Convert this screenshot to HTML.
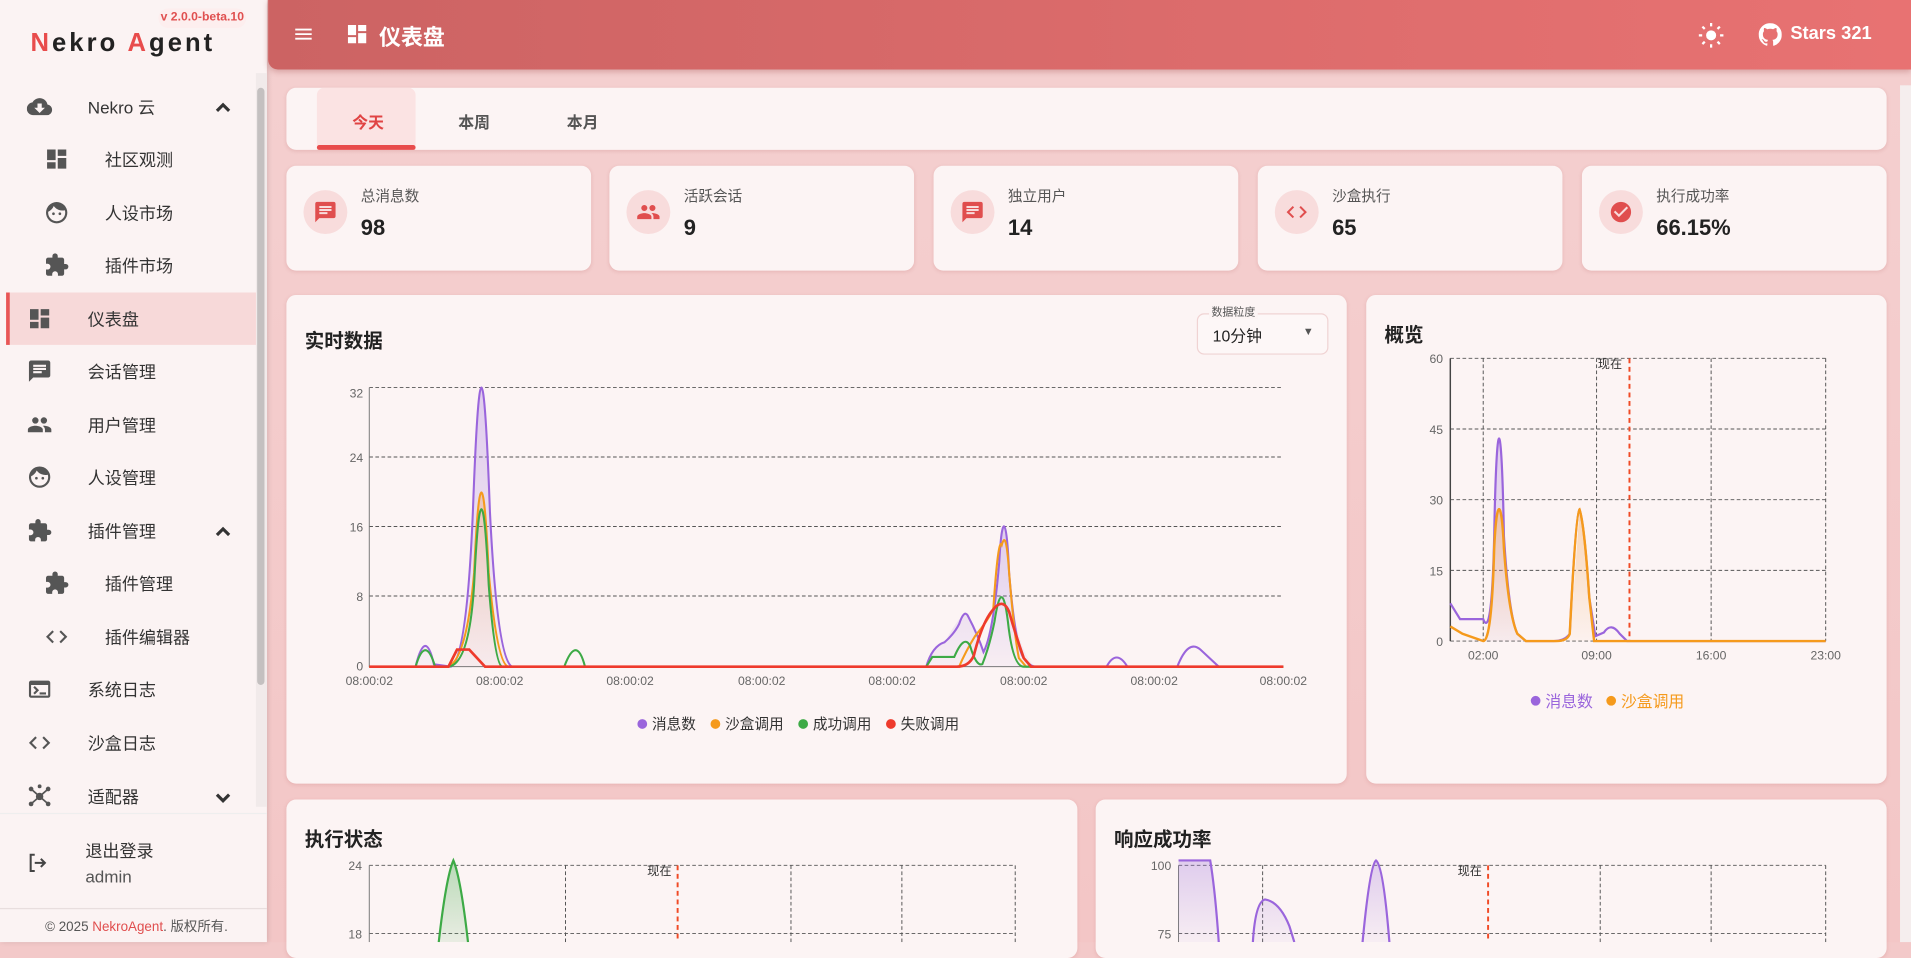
<!DOCTYPE html>
<html><head><meta charset="utf-8"><style>
*{box-sizing:border-box;margin:0;padding:0}
html,body{width:1911px;height:942px;overflow:hidden;background:#f3c9c9}
#w{position:absolute;left:0;top:0;width:1568px;height:773px;transform:scale(1.21875);transform-origin:0 0;font-family:"Liberation Sans","Noto Sans CJK SC",sans-serif;color:#333;background:linear-gradient(180deg,#f4d0d0,#f3c6c6)}
.a{position:absolute}
.card{position:absolute;background:#fcf4f4;border-radius:8px;box-shadow:0 1px 3px rgba(180,90,90,.18)}
#sb{left:0;top:0;width:219px;height:773px;background:#fbf3f3;box-shadow:1px 0 4px rgba(0,0,0,.12)}
.mi{position:absolute;left:0;width:210px;height:43px;font-size:14px;color:#333;display:flex;align-items:center}
.mi svg{position:absolute;width:21px;height:21px;fill:#555}
.mi span{position:absolute}
.mi .ch{left:176px;width:14px;height:14px;fill:none;stroke:#333;stroke-width:2.6}
.st .ic{position:absolute;left:14px;top:20px;width:36px;height:36px;border-radius:50%;background:#f8dcdc}
.st .ic svg{position:absolute;left:8px;top:8px;width:20px;height:20px;fill:#e04e4e}
.st .l{position:absolute;left:61px;top:16px;font-size:12px;color:#555}
.st .v{position:absolute;left:61px;top:41px;font-size:18px;font-weight:bold;color:#222}
.t{font-size:16px;font-weight:bold;color:#222}
</style></head><body><div id="w">
<div class="a" id="sb">
 <div class="a" style="left:130px;top:7px;width:72px;height:16px;border-radius:8px;background:#fdeeee;font-size:10px;color:#e05050;text-align:center;line-height:16px;font-weight:bold">v 2.0.0-beta.10</div>
 <div class="a" style="left:25px;top:24px;font-size:21px;font-weight:bold;letter-spacing:2.5px;color:#222"><span style="color:#e84c4c">N</span>ekro <span style="color:#e84c4c">A</span>gent</div>
 <div class="a" style="left:210px;top:60px;width:9px;height:602px;background:#f1eaea"></div>
 <div class="a" style="left:211px;top:72px;width:6px;height:490px;background:#c4c0c0;border-radius:3px"></div>
 <div class="mi" style="top:66px"><svg style="left:22px" viewBox="0 0 24 24"><path d="M19.35 10.04A7.49 7.49 0 0 0 12 4C9.11 4 6.6 5.640 5.35 8.04A6 6 0 0 0 0 14a6 6 0 0 0 6 6h13a5 5 0 0 0 .35-9.96zM17 13l-5 5-5-5h3V9h4v4h3z"/></svg><span style="left:72px">Nekro 云</span><svg class="ch" viewBox="0 0 14 14"><path d="M2 10l5-5 5 5"/></svg></div>
 <div class="mi" style="top:109px"><svg style="left:36px" viewBox="0 0 24 24"><path d="M3 13h8V3H3v10zm0 8h8v-6H3v6zm10 0h8V11h-8v10zm0-18v6h8V3h-8z"/></svg><span style="left:86px">社区观测</span></div>
 <div class="mi" style="top:153px"><svg style="left:36px" viewBox="0 0 24 24"><path d="M9 11.75a1.25 1.25 0 1 0 0 2.5 1.25 1.25 0 0 0 0-2.5zm6 0a1.25 1.25 0 1 0 0 2.5 1.25 1.25 0 0 0 0-2.5zM12 2a10 10 0 1 0 0 20 10 10 0 0 0 0-20zm0 18c-4.41 0-8-3.59-8-8 0-.29.02-.58.05-.86 2.360-1.05 4.230-2.98 5.210-5.37a9.970 9.970 0 0 0 10.410 3.970c.21.71.33 1.47.33 2.26 0 4.41-3.59 8-8 8z"/></svg><span style="left:86px">人设市场</span></div>
 <div class="mi" style="top:196px"><svg style="left:36px" viewBox="0 0 24 24"><path d="M20.5 11H19V7a2 2 0 0 0-2-2h-4V3.5a2.5 2.5 0 0 0-5 0V5H4a2 2 0 0 0-2 2v3.8h1.5a2.7 2.7 0 0 1 0 5.4H2V20a2 2 0 0 0 2 2h3.8v-1.5a2.7 2.7 0 0 1 5.4 0V22H17a2 2 0 0 0 2-2v-4h1.5a2.5 2.5 0 0 0 0-5z"/></svg><span style="left:86px">插件市场</span></div>
 <div class="a" style="left:5px;top:240px;width:205px;height:43px;background:#f7d9d9;border-left:3px solid #e85555"></div>
 <div class="mi" style="top:240px"><svg style="left:22px" viewBox="0 0 24 24"><path d="M3 13h8V3H3v10zm0 8h8v-6H3v6zm10 0h8V11h-8v10zm0-18v6h8V3h-8z"/></svg><span style="left:72px">仪表盘</span></div>
 <div class="mi" style="top:283px"><svg style="left:22px" viewBox="0 0 24 24"><path d="M20 2H4a2 2 0 0 0-2 2v18l4-4h14a2 2 0 0 0 2-2V4a2 2 0 0 0-2-2zM6 9h12v2H6V9zm8 5H6v-2h8v2zm4-6H6V6h12v2z"/></svg><span style="left:72px">会话管理</span></div>
 <div class="mi" style="top:327px"><svg style="left:22px" viewBox="0 0 24 24"><path d="M16 11a3 3 0 1 0 0-6 3 3 0 0 0 0 6zm-8 0a3 3 0 1 0 0-6 3 3 0 0 0 0 6zm0 2c-2.33 0-7 1.17-7 3.5V19h14v-2.5C15 14.17 10.33 13 8 13zm8 0c-.29 0-.62.02-.97.05 1.16.84 1.97 1.97 1.97 3.45V19h6v-2.5c0-2.33-4.67-3.5-7-3.5z"/></svg><span style="left:72px">用户管理</span></div>
 <div class="mi" style="top:370px"><svg style="left:22px" viewBox="0 0 24 24"><path d="M9 11.75a1.25 1.25 0 1 0 0 2.5 1.25 1.25 0 0 0 0-2.5zm6 0a1.25 1.25 0 1 0 0 2.5 1.25 1.25 0 0 0 0-2.5zM12 2a10 10 0 1 0 0 20 10 10 0 0 0 0-20zm0 18c-4.41 0-8-3.59-8-8 0-.29.02-.58.05-.86 2.360-1.05 4.230-2.98 5.210-5.37a9.970 9.970 0 0 0 10.410 3.970c.21.71.33 1.47.33 2.26 0 4.41-3.59 8-8 8z"/></svg><span style="left:72px">人设管理</span></div>
 <div class="mi" style="top:414px"><svg style="left:22px" viewBox="0 0 24 24"><path d="M20.5 11H19V7a2 2 0 0 0-2-2h-4V3.5a2.5 2.5 0 0 0-5 0V5H4a2 2 0 0 0-2 2v3.8h1.5a2.7 2.7 0 0 1 0 5.4H2V20a2 2 0 0 0 2 2h3.8v-1.5a2.7 2.7 0 0 1 5.4 0V22H17a2 2 0 0 0 2-2v-4h1.5a2.5 2.5 0 0 0 0-5z"/></svg><span style="left:72px">插件管理</span><svg class="ch" viewBox="0 0 14 14"><path d="M2 10l5-5 5 5"/></svg></div>
 <div class="mi" style="top:457px"><svg style="left:36px" viewBox="0 0 24 24"><path d="M20.5 11H19V7a2 2 0 0 0-2-2h-4V3.5a2.5 2.5 0 0 0-5 0V5H4a2 2 0 0 0-2 2v3.8h1.5a2.7 2.7 0 0 1 0 5.4H2V20a2 2 0 0 0 2 2h3.8v-1.5a2.7 2.7 0 0 1 5.4 0V22H17a2 2 0 0 0 2-2v-4h1.5a2.5 2.5 0 0 0 0-5z"/></svg><span style="left:86px">插件管理</span></div>
 <div class="mi" style="top:501px"><svg style="left:36px" viewBox="0 0 24 24"><path d="M9.4 16.6 4.8 12l4.6-4.6L8 6l-6 6 6 6 1.4-1.4zm5.2 0 4.6-4.6-4.6-4.6L16 6l6 6-6 6-1.4-1.4z"/></svg><span style="left:86px">插件编辑器</span></div>
 <div class="mi" style="top:544px"><svg style="left:22px" viewBox="0 0 24 24"><path d="M20 4H4a2 2 0 0 0-2 2v12a2 2 0 0 0 2 2h16a2 2 0 0 0 2-2V6a2 2 0 0 0-2-2zm0 14H4V8h16v10zm-2-1h-6v-2h6v2zM7.5 17l-1.41-1.41L8.67 13l-2.59-2.59L7.5 9l4 4-4 4z"/></svg><span style="left:72px">系统日志</span></div>
 <div class="mi" style="top:588px"><svg style="left:22px" viewBox="0 0 24 24"><path d="M9.4 16.6 4.8 12l4.6-4.6L8 6l-6 6 6 6 1.4-1.4zm5.2 0 4.6-4.6-4.6-4.6L16 6l6 6-6 6-1.4-1.4z"/></svg><span style="left:72px">沙盒日志</span></div>
 <div class="mi" style="top:632px"><svg style="left:22px" viewBox="0 0 24 24"><circle cx="12" cy="12" r="3.5"/><circle cx="4" cy="5" r="2.2"/><circle cx="20" cy="5" r="2.2"/><circle cx="4" cy="19" r="2.2"/><circle cx="20" cy="19" r="2.2"/><circle cx="12" cy="2.5" r="1.8"/><path d="M4 5l8 7 8-7M4 19l8-7 8 7" stroke="#555" stroke-width="1.6" fill="none"/></svg><span style="left:72px">适配器</span><svg class="ch" viewBox="0 0 14 14"><path d="M2 5l5 5 5-5"/></svg></div>
 <div class="a" style="left:0;top:667px;width:219px;height:1px;background:#eee"></div>
 <svg class="a" style="left:21px;top:698px;width:20px;height:20px" viewBox="0 0 24 24" fill="none" stroke="#444" stroke-width="2"><path d="M9 4H5v16h4M15 8l4 4-4 4M19 12H9"/></svg>
 <div class="a" style="left:70px;top:688px;font-size:14px;color:#333">退出登录</div>
 <div class="a" style="left:70px;top:711px;font-size:14px;color:#555">admin</div>
 <div class="a" style="left:0;top:745px;width:219px;height:1px;background:#e8dede"></div>
 <div class="a" style="left:37px;top:752px;font-size:11px;color:#555">© 2025 <span style="color:#e04e4e">NekroAgent</span>. 版权所有.</div>
</div>
<div class="a" style="left:220px;top:0;width:1348px;height:57px;border-radius:0 0 0 8px;background:linear-gradient(90deg,#cc6363,#e87272);box-shadow:0 2px 5px rgba(150,60,60,.3)">
 <svg class="a" style="left:20px;top:19px;width:18px;height:18px" viewBox="0 0 24 24" fill="#fff"><path d="M3 18h18v-2H3v2zm0-5h18v-2H3v2zm0-7v2h18V6H3z"/></svg>
 <svg class="a" style="left:63px;top:18px;width:20px;height:20px" viewBox="0 0 24 24" fill="#fff"><path d="M3 13h8V3H3v10zm0 8h8v-6H3v6zm10 0h8V11h-8v10zm0-18v6h8V3h-8z"/></svg>
 <div class="a" style="left:91px;top:17px;font-size:18px;font-weight:bold;color:#fff">仪表盘</div>
 <svg class="a" style="left:1173px;top:18px;width:22px;height:22px" viewBox="0 0 24 24" fill="#fff"><circle cx="12" cy="12" r="4.5"/><path d="M12 1v3M12 20v3M1 12h3M20 12h3M4.2 4.2l2.1 2.1M17.7 17.7l2.1 2.1M4.2 19.8l2.1-2.1M17.7 6.3l2.1-2.1" stroke="#fff" stroke-width="2"/></svg>
 <svg class="a" style="left:1223px;top:19px;width:19px;height:19px" viewBox="0 0 16 16" fill="#fff"><path d="M8 0C3.58 0 0 3.58 0 8c0 3.54 2.29 6.53 5.47 7.59.4.07.55-.17.55-.38v-1.33c-2.23.48-2.7-1.07-2.7-1.07-.36-.93-.89-1.17-.89-1.17-.73-.5.05-.49.05-.49.8.06 1.23.83 1.23.83.72 1.22 1.87.87 2.33.66.07-.52.28-.87.51-1.07-1.78-.2-3.64-.89-3.640-3.95 0-.87.31-1.59.82-2.15-.08-.2-.36-1.02.08-2.12 0 0 .67-.21 2.2.82a7.6 7.6 0 0 1 4 0c1.53-1.04 2.2-.82 2.2-.82.44 1.1.16 1.92.08 2.12.51.56.82 1.27.82 2.15 0 3.07-1.87 3.75-3.65 3.95.29.25.54.73.54 1.48v2.2c0 .21.15.46.55.38A8.01 8.01 0 0 0 16 8c0-4.42-3.58-8-8-8z"/></svg>
 <div class="a" style="left:1249px;top:19px;font-size:15px;font-weight:bold;color:#fff">Stars 321</div>
</div>
<div class="a" style="left:1559px;top:70px;width:9px;height:703px;background:#f5eeee"></div>
<div class="card" style="left:235px;top:72px;width:1313px;height:51px">
 <div class="a" style="left:25px;top:0;width:81px;height:51px;background:#fbe3e3;border-radius:6px 6px 0 0"></div>
 <div class="a" style="left:25px;top:47px;width:81px;height:4px;background:#e84c4c;border-radius:2px"></div>
 <div class="a" style="left:54px;top:18px;font-size:13px;font-weight:bold;color:#e04444">今天</div>
 <div class="a" style="left:141px;top:18px;font-size:13px;font-weight:bold;color:#555">本周</div>
 <div class="a" style="left:230px;top:18px;font-size:13px;font-weight:bold;color:#555">本月</div>
</div>
<div class="card st" style="left:235px;top:136px;width:250px;height:86px"><div class="ic"><svg viewBox="0 0 24 24"><path d="M20 2H4a2 2 0 0 0-2 2v18l4-4h14a2 2 0 0 0 2-2V4a2 2 0 0 0-2-2zM6 9h12v2H6V9zm8 5H6v-2h8v2zm4-6H6V6h12v2z"/></svg></div><div class="l">总消息数</div><div class="v">98</div></div>
<div class="card st" style="left:500px;top:136px;width:250px;height:86px"><div class="ic"><svg viewBox="0 0 24 24"><path d="M16 11a3 3 0 1 0 0-6 3 3 0 0 0 0 6zm-8 0a3 3 0 1 0 0-6 3 3 0 0 0 0 6zm0 2c-2.33 0-7 1.17-7 3.5V19h14v-2.5C15 14.17 10.33 13 8 13zm8 0c-.29 0-.62.02-.97.05 1.16.84 1.97 1.970 1.970 3.45V19h6v-2.5c0-2.33-4.67-3.5-7-3.5z"/></svg></div><div class="l">活跃会话</div><div class="v">9</div></div>
<div class="card st" style="left:766px;top:136px;width:250px;height:86px"><div class="ic"><svg viewBox="0 0 24 24"><path d="M20 2H4a2 2 0 0 0-2 2v18l4-4h14a2 2 0 0 0 2-2V4a2 2 0 0 0-2-2zM6 9h12v2H6V9zm8 5H6v-2h8v2zm4-6H6V6h12v2z"/></svg></div><div class="l">独立用户</div><div class="v">14</div></div>
<div class="card st" style="left:1032px;top:136px;width:250px;height:86px"><div class="ic"><svg viewBox="0 0 24 24"><path d="M9.4 16.6 4.8 12l4.6-4.6L8 6l-6 6 6 6 1.4-1.4zm5.2 0 4.6-4.6-4.6-4.6L16 6l6 6-6 6-1.4-1.4z"/></svg></div><div class="l">沙盒执行</div><div class="v">65</div></div>
<div class="card st" style="left:1298px;top:136px;width:250px;height:86px"><div class="ic"><svg viewBox="0 0 24 24"><path d="M12 2a10 10 0 1 0 0 20 10 10 0 0 0 0-20zm-2 15-5-5 1.41-1.41L10 14.17l7.59-7.59L19 8l-9 9z"/></svg></div><div class="l">执行成功率</div><div class="v">66.15%</div></div>

<div class="card" style="left:235px;top:242px;width:870px;height:401px">
 <div class="a t" style="left:15px;top:24px">实时数据</div>
 <div class="a" style="left:747px;top:15px;width:108px;height:34px;border:1px solid #f0d3d3;border-radius:6px;background:#fdf7f7"></div>
 <div class="a" style="left:757px;top:7px;font-size:9px;color:#555;background:#fcf4f4;padding:0 2px">数据粒度</div>
 <div class="a" style="left:760px;top:23px;font-size:13px;color:#222">10分钟</div>
 <div class="a" style="left:834px;top:25px;font-size:9px;color:#555">▼</div>
</div>
<svg class="a" style="left:0;top:0" width="1568" height="773" viewBox="0 0 1568 773" font-family="Liberation Sans" font-size="10" fill="#666">
 <defs>
  <linearGradient id="gp" x1="0" y1="0" x2="0" y2="1"><stop offset="0" stop-color="#9b6fdc" stop-opacity=".3"/><stop offset="1" stop-color="#9b6fdc" stop-opacity=".05"/></linearGradient>
  <linearGradient id="go" x1="0" y1="0" x2="0" y2="1"><stop offset="0" stop-color="#f39a3a" stop-opacity=".3"/><stop offset="1" stop-color="#f39a3a" stop-opacity=".03"/></linearGradient>
 </defs>
 <g stroke="#555" stroke-dasharray="3,2" stroke-width=".8">
  <path d="M303 318H1053M303 375H1053M303 432H1053M303 489H1053"/>
 </g>
 <path d="M303 318V547H1053" stroke="#777" fill="none" stroke-width=".8"/>
 <g font-size="10" text-anchor="end"><text x="298" y="326">32</text><text x="298" y="379">24</text><text x="298" y="436">16</text><text x="298" y="493">8</text><text x="298" y="550">0</text></g>
 <g font-size="10" text-anchor="middle" fill="#666"><text x="303" y="562">08:00:02</text><text x="410" y="562">08:00:02</text><text x="517" y="562">08:00:02</text><text x="625" y="562">08:00:02</text><text x="732" y="562">08:00:02</text><text x="840" y="562">08:00:02</text><text x="947" y="562">08:00:02</text><text x="1053" y="562">08:00:02</text></g>
 <path d="M341 547Q349 514 356 545L370 547Q383 540 388 420C393 284 397 284 402 420Q408 540 420 547Z" fill="url(#gp)"/>
 <path d="M760 547Q765 530 775 527Q790 500 794 505Q802 520 807 535Q815 520 820 460C822 421 826 421 828 470Q833 535 850 547Z" fill="url(#gp)"/>
 <path d="M372 547Q385 540 389 470C393 382 397 382 401 470Q408 545 417 547Z" fill="url(#go)"/>
 <g fill="none" stroke-width="1.7">
  <path d="M303 547H341Q349 514 356 545L370 547Q383 540 388 420C393 284 397 284 402 420Q408 540 420 547H760Q765 530 775 527Q783 520 787 512Q791 500 794 505Q802 520 807 535Q815 520 820 460C822 421 826 421 828 470Q833 530 840 540Q845 547 850 547H908Q916 532 925 547H966Q975 524 985 533L1000 547H1053" stroke="#9a65dc"/>
  <path d="M303 547H368Q383 540 389 470C393 382 397 382 401 470Q408 545 417 547H787Q792 535 800 522Q810 510 815 500Q819 440 822 447C824 440 826 440 828 470Q832 520 836 540L842 547H1053" stroke="#f59a1c"/>
  <path d="M303 547H341Q349 520 357 547H368Q385 545 389 480C393 397 397 397 401 480Q406 545 412 547H463Q473 520 480 547H760L765 539H783Q791 520 796 530Q801 547 806 545Q812 530 816 510Q822 470 827 510Q831 547 840 547H1053" stroke="#3daa46"/>
  <path d="M303 547H368L375 533H385L398 547H785Q795 547 799 538Q806 510 815 500Q823 490 828 502Q833 520 840 540L846 547H1053" stroke="#ee3a2c" stroke-width="2.2"/>
 </g>
 <g font-size="12" fill="#333"><circle cx="527" cy="594" r="4" fill="#9a65dc"/><text x="535" y="598">消息数</text><circle cx="587" cy="594" r="4" fill="#f59a1c"/><text x="595" y="598">沙盒调用</text><circle cx="659" cy="594" r="4" fill="#3daa46"/><text x="667" y="598">成功调用</text><circle cx="731" cy="594" r="4" fill="#ee3a2c"/><text x="739" y="598">失败调用</text></g>
</svg>
<div class="card" style="left:1121px;top:242px;width:427px;height:401px"><div class="a t" style="left:15px;top:19px">概览</div></div>
<div class="card" style="left:235px;top:656px;width:649px;height:130px"><div class="a t" style="left:15px;top:19px">执行状态</div></div>
<div class="card" style="left:899px;top:656px;width:649px;height:130px"><div class="a t" style="left:15px;top:19px">响应成功率</div></div>
<svg class="a" style="left:0;top:0" width="1568" height="773" viewBox="0 0 1568 773" font-family="Liberation Sans" font-size="10" fill="#666">
 <defs>
  <linearGradient id="gp2" x1="0" y1="0" x2="0" y2="1"><stop offset="0" stop-color="#9b6fdc" stop-opacity=".3"/><stop offset="1" stop-color="#9b6fdc" stop-opacity=".05"/></linearGradient>
  <linearGradient id="go2" x1="0" y1="0" x2="0" y2="1"><stop offset="0" stop-color="#f39a3a" stop-opacity=".35"/><stop offset="1" stop-color="#f39a3a" stop-opacity=".03"/></linearGradient>
  <linearGradient id="gg2" x1="0" y1="0" x2="0" y2="1"><stop offset="0" stop-color="#3daa46" stop-opacity=".35"/><stop offset="1" stop-color="#3daa46" stop-opacity=".1"/></linearGradient>
 </defs>
 <g stroke="#555" stroke-dasharray="3,2" stroke-width=".8" fill="none">
  <path d="M1190 294H1498M1190 352H1498M1190 410H1498M1190 468H1498M1190 526H1498M1217 294V526M1310 294V526M1404 294V526M1498 294V526"/>
  <path d="M303 710H833M303 766H833M464 710V773M649 710V773M740 710V773M833 710V773"/>
  <path d="M967 710H1498M967 766H1498M1036 710V773M1313 710V773M1404 710V773M1498 710V773"/>
 </g>
 <path d="M1190 294V526" stroke="#444" stroke-width="1.2"/>
 <path d="M303 710V773M967 710V773" stroke="#777" stroke-width=".8"/>
 <g stroke="#f04a25" stroke-dasharray="4,3" stroke-width="1.6"><path d="M1337 294V526M556 710V773M1221 710V773"/></g>
 <g fill="#333" font-size="10"><text x="1311" y="302">现在</text><text x="531" y="718">现在</text><text x="1196" y="718">现在</text></g>
 <g text-anchor="end"><text x="1184" y="298">60</text><text x="1184" y="356">45</text><text x="1184" y="414">30</text><text x="1184" y="472">15</text><text x="1184" y="530">0</text>
  <text x="297" y="714">24</text><text x="297" y="770">18</text><text x="961" y="714">100</text><text x="961" y="770">75</text></g>
 <g text-anchor="middle"><text x="1217" y="541">02:00</text><text x="1310" y="541">09:00</text><text x="1404" y="541">16:00</text><text x="1498" y="541">23:00</text></g>
 <path d="M1217 526Q1225 526 1226 440C1228 333 1232 333 1234 440Q1238 505 1245 520L1250 526Z" fill="url(#gp2)"/>
 <path d="M1217 526Q1225 526 1226 450C1228 407 1232 407 1234 450Q1238 505 1245 520L1250 526ZM1282 526L1288 521Q1292 480 1296 418Q1300 440 1304 480L1308 526Z" fill="url(#go2)"/>
 <path d="M1190 495L1198 508H1217Q1224 526 1226 440C1228 333 1232 333 1234 440Q1238 505 1245 520L1252 526H1275Q1284 526 1288 520Q1293 420 1296 418Q1300 430 1304 490L1309 522L1316 519Q1322 510 1329 520L1335 526H1498" fill="none" stroke="#9a65dc" stroke-width="1.8"/>
 <path d="M1190 514L1200 520L1217 526Q1224 526 1226 450C1228 407 1232 407 1234 450Q1238 505 1245 520L1252 526H1277Q1286 526 1288 520Q1293 420 1296 418Q1300 430 1304 490L1308 526H1498" fill="none" stroke="#f59a1c" stroke-width="2"/>
 <g font-size="13"><circle cx="1260" cy="575" r="4" fill="#9a65dc"/><text x="1268" y="580" fill="#9a65dc">消息数</text><circle cx="1322" cy="575" r="4" fill="#f59a1c"/><text x="1330" y="580" fill="#f59a1c">沙盒调用</text></g>
 <path d="M360 773Q366 720 372 706Q378 720 384 773Z" fill="url(#gg2)"/>
 <path d="M360 773Q366 720 372 706Q378 720 384 773" fill="none" stroke="#3daa46" stroke-width="1.8"/>
 <path d="M967 773V706H993L1000 773ZM1028 773Q1030 740 1038 738Q1050 740 1058 760L1062 773ZM1118 773Q1124 710 1129 706Q1135 710 1140 773Z" fill="url(#gp2)"/>
 <path d="M967 706H993Q997 730 1000 773M1028 773Q1030 740 1038 738Q1050 740 1058 760L1062 773M1118 773Q1124 710 1129 706Q1135 710 1140 773" fill="none" stroke="#9a65dc" stroke-width="1.8"/>
</svg>
</div></body></html>
